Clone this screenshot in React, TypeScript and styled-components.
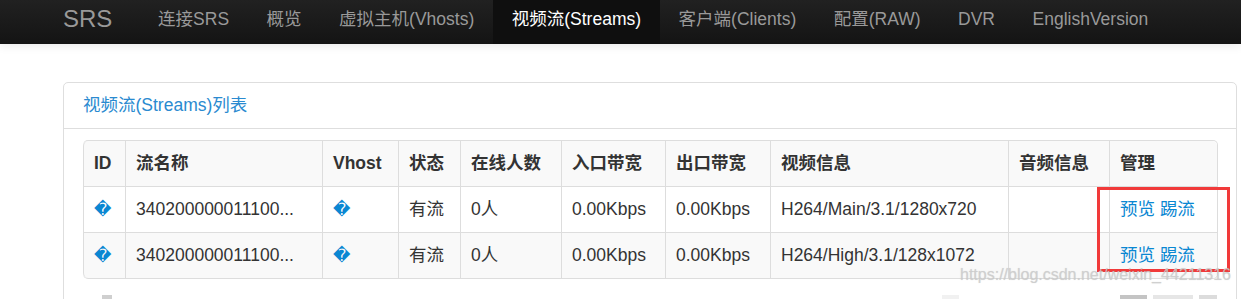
import React from "react";
import styled, { createGlobalStyle } from "styled-components";

const GlobalStyle = createGlobalStyle`
  html, body {
    margin: 0;
    padding: 0;
    height: 299px;
    overflow: hidden;
    background: #fff;
  }
  body {
    font-family: "Liberation Sans", "Noto Sans CJK SC", Arial, sans-serif;
    color: #333;
  }
`;

const Page = styled.div`
  position: relative;
  width: 1241px;
  height: 299px;
  overflow: hidden;
`;

const Navbar = styled.nav`
  display: flex;
  align-items: stretch;
  height: 44px;
  padding-left: 63px;
  background: linear-gradient(to bottom, #212121, #141414);
  box-shadow: 0 1px 10px rgba(0, 0, 0, 0.1);
  position: relative;
  z-index: 1;
`;

const Brand = styled.a`
  display: block;
  font-size: 24px;
  line-height: 38px;
  padding: 0 27px 6px 0;
  color: #999;
  text-decoration: none;
`;

const NavItem = styled.a<{ $active?: boolean }>`
  display: block;
  font-size: 17.5px;
  line-height: 38px;
  padding: 0 18.75px 6px;
  color: ${(p) => (p.$active ? "#fff" : "#999")};
  background: ${(p) => (p.$active ? "#0f0f0f" : "transparent")};
  text-decoration: none;
  white-space: nowrap;
`;

const Main = styled.main`
  padding: 38px 4px 0 63px;
`;

const Panel = styled.section`
  border: 1px solid #dedede;
  border-radius: 5px;
  height: 400px;
`;

const PanelHeading = styled.div`
  height: 45px;
  line-height: 45px;
  padding: 0 19px;
  border-bottom: 1px solid #dedede;
  font-size: 17.5px;
  color: #2a8ad0;
`;

const PanelBody = styled.div`
  padding: 11px 19px 0;
`;

const Table = styled.table`
  width: 1135px;
  table-layout: fixed;
  border-collapse: separate;
  border-spacing: 0;
  border: 1px solid #ddd;
  border-left: 0;
  border-radius: 5px;
  font-size: 17.5px;
  line-height: 25px;
  color: #333;
`;

const Th = styled.th`
  text-align: left;
  font-weight: bold;
  padding: 10px 10px;
  border-left: 1px solid #ddd;
  background: #f9f9f9;
  white-space: nowrap;
  overflow: hidden;
  &:first-child {
    border-top-left-radius: 5px;
  }
  &:last-child {
    border-top-right-radius: 5px;
  }
`;

const Row = styled.tr<{ $striped?: boolean }>`
  background: ${(p) => (p.$striped ? "#f9f9f9" : "#fff")};
  &:last-child td:first-child {
    border-bottom-left-radius: 5px;
  }
  &:last-child td:last-child {
    border-bottom-right-radius: 5px;
  }
`;

const Td = styled.td`
  text-align: left;
  padding: 10px 10px;
  border-left: 1px solid #ddd;
  border-top: 1px solid #ddd;
  white-space: nowrap;
  overflow: hidden;
`;

const Glyph = styled.span`
  font-family: "DejaVu Sans", sans-serif;
  font-size: 17px;
  color: #0a87d2;
`;

const Link = styled.a`
  color: #0a87d2;
  text-decoration: none;
`;

const BelowRow = styled.div`
  display: flex;
  align-items: center;
  margin-top: 16px;
  padding-left: 19px;
  gap: 6px;
`;

const Fragment = styled.span<{ $w: number; $c: string }>`
  display: block;
  width: ${(p) => p.$w}px;
  height: 5px;
  background: ${(p) => p.$c};
`;

const Spacer = styled.span<{ $w: number }>`
  display: block;
  width: ${(p) => p.$w}px;
`;

const Highlight = styled.div`
  position: absolute;
  left: 1097px;
  top: 187px;
  width: 133px;
  height: 85px;
  box-sizing: border-box;
  border: 3px solid #f13a3a;
  pointer-events: none;
`;

const Watermark = styled.div`
  position: absolute;
  left: 960px;
  top: 266px;
  font-family: "Liberation Sans", Arial, sans-serif;
  font-size: 16px;
  line-height: 18px;
  color: rgba(205, 205, 205, 0.85);
  text-shadow: 0 0 1px rgba(150, 150, 150, 0.35);
  white-space: nowrap;
  pointer-events: none;
`;

const navItems = [
  "连接SRS",
  "概览",
  "虚拟主机(Vhosts)",
  "视频流(Streams)",
  "客户端(Clients)",
  "配置(RAW)",
  "DVR",
  "EnglishVersion",
];

const cols = [42, 197, 76, 62, 101, 104, 105, 238, 101, 108];
const headers = ["ID", "流名称", "Vhost", "状态", "在线人数", "入口带宽", "出口带宽", "视频信息", "音频信息", "管理"];

const streams = [
  { name: "340200000011100...", video: "H264/Main/3.1/1280x720" },
  { name: "340200000011100...", video: "H264/High/3.1/128x1072" },
];

export default function App() {
  return (
    <Page>
      <GlobalStyle />
      <Navbar>
        <Brand>SRS</Brand>
        {navItems.map((item) => (
          <NavItem key={item} $active={item === "视频流(Streams)"}>
            {item}
          </NavItem>
        ))}
      </Navbar>
      <Main>
        <Panel>
          <PanelHeading>视频流(Streams)列表</PanelHeading>
          <PanelBody>
            <Table>
              <colgroup>
                {cols.map((w, i) => (
                  <col key={i} style={{ width: w }} />
                ))}
              </colgroup>
              <thead>
                <tr>
                  {headers.map((h) => (
                    <Th key={h}>{h}</Th>
                  ))}
                </tr>
              </thead>
              <tbody>
                {streams.map((s, i) => (
                  <Row key={i} $striped={i % 2 === 1}>
                    <Td>
                      <Glyph>{"\uFFFD"}</Glyph>
                    </Td>
                    <Td>{s.name}</Td>
                    <Td>
                      <Glyph>{"\uFFFD"}</Glyph>
                    </Td>
                    <Td>有流</Td>
                    <Td>0人</Td>
                    <Td>0.00Kbps</Td>
                    <Td>0.00Kbps</Td>
                    <Td>{s.video}</Td>
                    <Td></Td>
                    <Td>
                      <Link>预览</Link> <Link>踢流</Link>
                    </Td>
                  </Row>
                ))}
              </tbody>
            </Table>
            <BelowRow>
              <Fragment $w={10} $c="#cfcfcf" />
              <Spacer $w={820} />
              <Fragment $w={17} $c="#f1f1f1" />
              <Spacer $w={150} />
              <Fragment $w={27} $c="#c4c4c4" />
              <Fragment $w={40} $c="#e6e6e6" />
              <Fragment $w={18} $c="#dcdcdc" />
            </BelowRow>
          </PanelBody>
        </Panel>
      </Main>
      <Highlight />
      <Watermark>https://blog.csdn.net/weixin_44211316</Watermark>
    </Page>
  );
}
